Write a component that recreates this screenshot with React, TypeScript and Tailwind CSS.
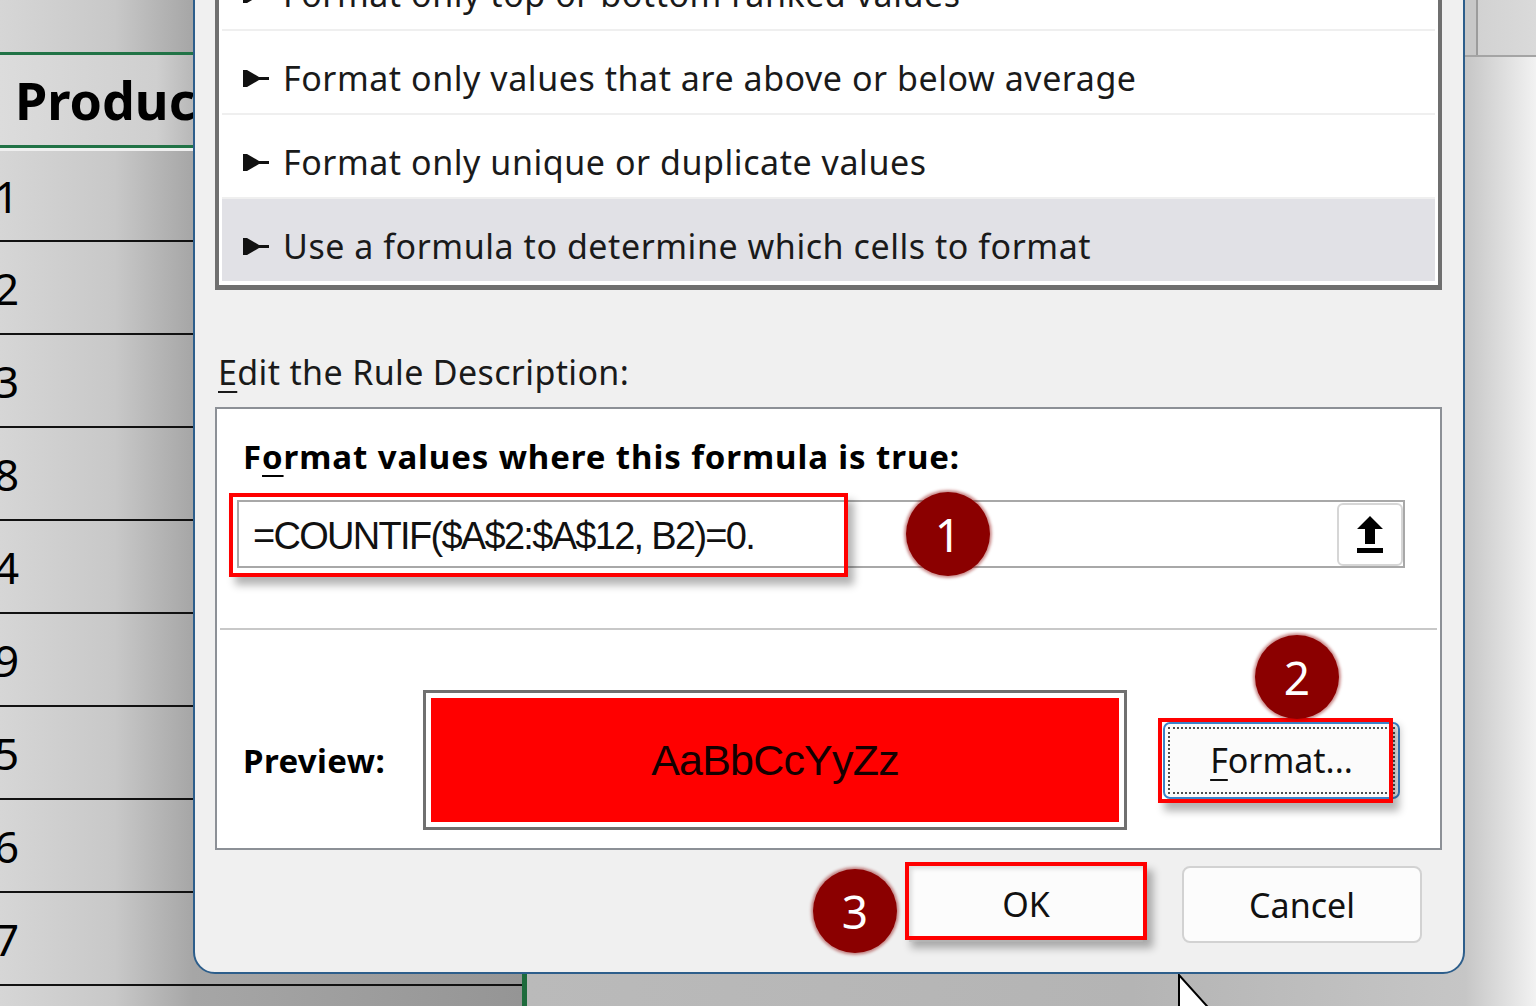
import React from "react";

function Marker() {
  return (
    <svg width="26" height="17" viewBox="0 0 26 17" className="shrink-0">
      <polygon points="0,0 4,0 16,7 26,7 26,10 16,10 4,17 0,17" fill="#111" />
    </svg>
  );
}

function Badge({ n, left, top }: { n: string; left: string; top: string }) {
  return (
    <div
      className={`absolute ${left} ${top} w-[84px] h-[84px] rounded-full bg-[#8b0000] shadow-[0_0_3px_2px_rgba(139,0,0,0.45)] flex items-center justify-center text-white text-[46px] leading-none font-['Noto_Sans',sans-serif]`}
    >
      {n}
    </div>
  );
}

export default function App() {
  const rows = ["1", "2", "3", "8", "4", "9", "5", "6", "7"];
  const items = [
    "Format only top or bottom ranked values",
    "Format only values that are above or below average",
    "Format only unique or duplicate values",
    "Use a formula to determine which cells to format",
  ];
  return (
    <div className="relative w-[1536px] h-[1006px] overflow-hidden flex bg-[#b8b8b8] font-['Noto_Sans',sans-serif] text-black">
      {/* Column A of spreadsheet */}
      <div className="w-[522px] h-full shrink-0 flex flex-col bg-[linear-gradient(to_right,#d6d6d6_0%,#c8c8c8_22%,#a6a6a6_37%,#959595_100%)]">
        <div className="h-[52px] shrink-0" />
        <div className="h-[3px] shrink-0 bg-[#217346]" />
        <div className="h-[90px] shrink-0 flex items-center pl-[15px] text-[52px] font-bold leading-none whitespace-nowrap bg-[linear-gradient(to_right,#dcdcdc_0%,#cfcfcf_30%,#b8b8b8_37%,#a8a8a8_100%)]">
          Product
        </div>
        <div className="h-[3px] shrink-0 bg-[#217346]" />
        <div className="h-[3px] shrink-0 bg-[#efefef]" />
        {rows.map((r, i) => (
          <div
            key={r + i}
            className={`${i === 0 ? "h-[91px]" : "h-[93px]"} shrink-0 flex items-center border-b-2 border-[#111] text-[44px] leading-none`}
          >
            <span className="ml-[-6px]">{r}</span>
          </div>
        ))}
      </div>
      {/* Column divider (selection) */}
      <div className="w-[5px] h-full shrink-0 bg-[#1e6b3c]" />
      {/* Column B */}
      <div className="flex-1 h-full flex flex-col">
        <div className="h-[57px] shrink-0 flex bg-[#cdcdcd] border-b-2 border-[#a4a4a4]">
          <div className="w-[951px] h-full border-r-2 border-[#9c9c9c] bg-[#c8c8c8]" />
          <div className="flex-1 h-full bg-[linear-gradient(to_right,#d2d2d2,#dadada)]" />
        </div>
        <div className="flex-1 bg-[linear-gradient(to_right,#bababa_0%,#b4b4b4_60%,#c6c6c6_93%,#f2f2f2_100%)]" />
      </div>

      {/* Dialog window */}
      <div className="absolute left-[193px] top-[-80px] w-[1272px] h-[1054px] border-2 border-[#2d5e8b] rounded-b-[22px] bg-[#f0f0f0] pt-[18px] pl-[20px] pr-[21px] flex flex-col">
        {/* Rule type list */}
        <div className="border-[4px] border-b-[5px] border-[#6f6f6f] bg-white px-[3px] pt-[3px] pb-[4px] flex flex-col">
          {items.map((t, i) => (
            <React.Fragment key={t}>
              {i > 0 && <div className="h-[2px] bg-[#efefef]" />}
              <div
                className={`h-[82px] pt-[24px] pl-[21px] ${i === 3 ? "bg-[#e1e1e6]" : "bg-white"}`}
              >
                <div className="flex items-center h-[46px] gap-[14px]">
                  <Marker />
                  <span className="text-[34px] leading-[46px] tracking-[0.55px] text-[#1a1a1a] whitespace-nowrap">
                    {t}
                  </span>
                </div>
              </div>
            </React.Fragment>
          ))}
        </div>

        {/* Edit the rule description label */}
        <div className="pt-[59px] pb-[12px] pl-[3px] text-[34px] leading-[46px] tracking-[0.35px] text-[#1a1a1a] whitespace-nowrap">
          <span className="underline decoration-2 underline-offset-[6px]">E</span>dit the Rule Description:
        </div>

        {/* Description box */}
        <div className="h-[443px] border-2 border-[#8c9096] bg-white flex flex-col">
          <div className="mt-[28px] ml-[26px] text-[33px] leading-[40px] tracking-[0.9px] font-bold whitespace-nowrap">
            F<span className="underline decoration-2 underline-offset-[6px]">o</span>rmat values where this formula is true:
          </div>
          <div className="mt-[23px] ml-[20px] mr-[35px] h-[68px] border-2 border-[#a8a8a8] bg-white flex items-center justify-between">
            <span className="pl-[14px] pt-[4px] font-['Liberation_Sans',sans-serif] text-[38px] tracking-[-1.7px] leading-none text-[#111] whitespace-nowrap">
              =COUNTIF($A$2:$A$12, B2)=0.
            </span>
            <div className="h-[63px] w-[66px] mt-[1px] rounded-[6px] border-2 border-[#d6d6d6] bg-white flex items-center justify-center">
              <svg width="28" height="38" viewBox="0 0 28 38">
                <path d="M14 0 L27 13 L19 13 L19 28 L9 28 L9 13 L1 13 Z" fill="#000" />
                <rect x="1" y="32" width="26" height="5" fill="#000" />
              </svg>
            </div>
          </div>
          <div className="mt-[60px] mx-[3px] h-[2px] bg-[#c8c8c8]" />
          <div className="mt-[60px] h-[140px] ml-[26px] flex items-center">
            <div className="w-[180px] text-[33px] tracking-[0.4px] font-bold leading-none">Preview:</div>
            <div className="w-[704px] h-[140px] border-[3px] border-[#707070] p-[5px] bg-white">
              <div className="w-full h-full bg-[#ff0000] flex items-center justify-center">
                <span className="font-['Liberation_Sans',sans-serif] text-[43px] tracking-[-0.8px] leading-none text-[#140000]">
                  AaBbCcYyZz
                </span>
              </div>
            </div>
            <div className="ml-[36px] w-[237px] h-[77px] relative rounded-[7px] border-2 border-[#3b83c9] bg-[#fbfbfb] flex items-center justify-center">
              <div className="absolute inset-[3px] border-2 border-dotted border-[#505050]" />
              <span className="text-[34px] leading-none text-[#111]">
                <span className="underline decoration-2 underline-offset-[6px]">F</span>ormat...
              </span>
            </div>
          </div>
        </div>

        {/* OK / Cancel */}
        <div className="mt-[16px] mr-[20px] flex justify-end gap-[39px]">
          <div className="w-[234px] h-[76px] bg-[#fcfcfc] shadow-[inset_3px_3px_4px_rgba(0,0,0,0.12)] flex items-center justify-center text-[34px] leading-none text-[#111]">
            OK
          </div>
          <div className="w-[240px] h-[77px] rounded-[8px] border-2 border-[#d2d2d2] bg-[#fcfcfc] flex items-center justify-center text-[34px] leading-none text-[#111]">
            Cancel
          </div>
        </div>
      </div>

      {/* Red annotation boxes */}
      <div className="absolute left-[229px] top-[493px] w-[619px] h-[84px] border-[4px] border-[#ff0000] shadow-[6px_8px_8px_rgba(0,0,0,0.3)]" />
      <div className="absolute left-[1158px] top-[718px] w-[235px] h-[85px] border-[4px] border-[#ff0000] shadow-[6px_8px_8px_rgba(0,0,0,0.3)]" />
      <div className="absolute left-[905px] top-[862px] w-[242px] h-[78px] border-[4px] border-[#ff0000] shadow-[6px_8px_8px_rgba(0,0,0,0.3)]" />

      {/* Numbered badges */}
      <Badge n="1" left="left-[906px]" top="top-[492px]" />
      <Badge n="2" left="left-[1255px]" top="top-[635px]" />
      <Badge n="3" left="left-[813px]" top="top-[869px]" />

      {/* Mouse cursor */}
      <svg className="absolute left-[1178px] top-[974px]" width="40" height="60" viewBox="0 0 40 60">
        <path d="M1 1 L1 54 L13 43 L21 60 L28 57 L20 41 L37 41 Z" fill="#fff" stroke="#000" strokeWidth="2" />
      </svg>
    </div>
  );
}
